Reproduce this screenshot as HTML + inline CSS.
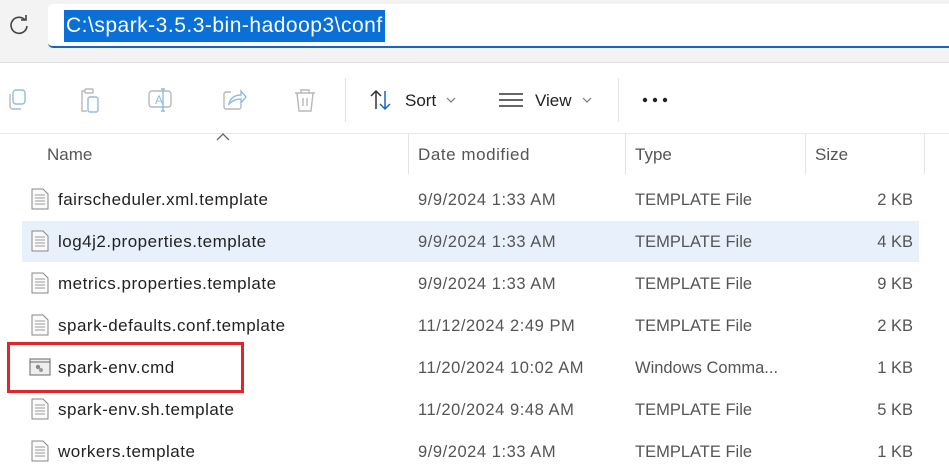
<!DOCTYPE html>
<html><head><meta charset="utf-8"><style>
*{margin:0;padding:0;box-sizing:border-box}
body{width:949px;height:472px;overflow:hidden;background:#fff;font-family:"Liberation Sans",sans-serif;color:#1a1a1a;position:relative}
.top{position:absolute;left:0;top:0;width:949px;height:63px;background:#f3f3f3;border-bottom:1px solid #e0e0e0}
.addr{position:absolute;left:48px;top:4px;width:901px;height:44px;background:#fff;border-radius:5px 0 0 5px;border-bottom:2px solid #1a64c2}
.sel{position:absolute;left:64px;top:10px;height:32px;background:#0a6fd6;color:#fff;font-size:21px;line-height:32px;padding:0 2px;letter-spacing:0.5px}
.tb{position:absolute}
.lbl{position:absolute;font-size:17px;color:#222}
.sep{position:absolute;width:1px;background:#e3e3e3}
.row{position:absolute;left:22px;width:897px;height:41px}
.t{position:absolute;font-size:16.5px;color:#222;white-space:nowrap}
.n{font-size:17px;letter-spacing:0.5px}
.d{letter-spacing:0.55px}
.g{color:#555}
.ic{position:absolute;left:31px}
</style></head><body>
<div class="top"></div>
<svg class="tb" style="left:8px;top:14px" width="22" height="22" viewBox="0 0 22 22"><path d="M17 6A8 8 0 1 0 19 12" fill="none" stroke="#444" stroke-width="1.6"/><path d="M13 5h5V0" fill="none" stroke="#444" stroke-width="1.6" transform="translate(0,1)"/></svg>
<div class="addr"></div>
<div class="sel">C:\spark-3.5.3-bin-hadoop3\conf</div>

<svg class="tb" style="left:5px;top:88px" width="24" height="24" viewBox="0 0 24 24" fill="none" stroke-width="1.4"><rect x="8" y="2" width="12" height="14" rx="3" stroke="#8fbbe6"/><path d="M5 6v12a3 3 0 0 0 3 3h8" stroke="#b8b8b8"/></svg>
<svg class="tb" style="left:77px;top:86px" width="24" height="28" viewBox="0 0 24 28" fill="none" stroke-width="1.4"><path d="M8 5H5v20h5" stroke="#b8b8b8"/><rect x="8" y="3" width="8" height="4" rx="1" stroke="#b8b8b8"/><rect x="11" y="11" width="10" height="15" rx="2" stroke="#8fbbe6"/></svg>
<svg class="tb" style="left:147px;top:87px" width="28" height="26" viewBox="0 0 28 26" fill="none" stroke-width="1.4"><rect x="2" y="4" width="22" height="16" rx="3" stroke="#b8b8b8"/><text x="8" y="17" font-size="12" fill="#8fbbe6" stroke="none" font-family="Liberation Sans">A</text><path d="M16 2v22M14 2h4M14 24h4" stroke="#8fbbe6"/></svg>
<svg class="tb" style="left:221px;top:87px" width="26" height="26" viewBox="0 0 26 26" fill="none" stroke-width="1.4"><path d="M10 5H5a2 2 0 0 0-2 2v13a2 2 0 0 0 2 2h13a2 2 0 0 0 2-2v-3" stroke="#b8b8b8"/><path d="M8 17c1-6 6-9 12-9V4l5 6-5 6v-4c-5 0-9 2-12 5z" stroke="#8fbbe6"/></svg>
<svg class="tb" style="left:292px;top:87px" width="26" height="26" viewBox="0 0 26 26" fill="none" stroke="#b8b8b8" stroke-width="1.4"><path d="M3 6h20M9 6V3h8v3M5 6l2 18h12l2-18M11 11v8M15 11v8"/></svg>
<div class="sep" style="left:345px;top:78px;height:44px"></div>
<svg class="tb" style="left:368px;top:88px" width="26" height="24" viewBox="0 0 26 24" fill="none" stroke="#333" stroke-width="1.5"><path d="M8 21V3M3 8l5-5 5 5"/><path d="M17 3v18M12 16l5 5 5-5" stroke="#1a64c2"/></svg>
<div class="lbl" style="left:405px;top:91px">Sort</div>
<svg class="tb" style="left:446px;top:97px" width="10" height="6" viewBox="0 0 10 6"><path d="M1 1l4 4 4-4" fill="none" stroke="#777" stroke-width="1.2"/></svg>
<svg class="tb" style="left:498px;top:91px" width="26" height="18" viewBox="0 0 26 18" stroke="#333" stroke-width="1.4"><path d="M1 3h24M1 9h24M1 15h24"/></svg>
<div class="lbl" style="left:535px;top:91px">View</div>
<svg class="tb" style="left:582px;top:97px" width="10" height="6" viewBox="0 0 10 6"><path d="M1 1l4 4 4-4" fill="none" stroke="#777" stroke-width="1.2"/></svg>
<div class="sep" style="left:618px;top:78px;height:44px"></div>
<svg class="tb" style="left:642px;top:97px" width="28" height="6" viewBox="0 0 28 6"><circle cx="3" cy="3" r="2.2" fill="#222"/><circle cx="13" cy="3" r="2.2" fill="#222"/><circle cx="23" cy="3" r="2.2" fill="#222"/></svg>

<div style="position:absolute;left:0;top:133px;width:949px;height:1px;background:#e8e8e8"></div>
<svg class="tb" style="left:216px;top:133px" width="14" height="8" viewBox="0 0 14 8"><path d="M1 7l6-6 6 6" fill="none" stroke="#666" stroke-width="1.3"/></svg>
<div class="t g" style="left:47px;top:145px;font-size:17px">Name</div>
<div class="sep" style="left:408px;top:134px;height:40px"></div>
<div class="t g d" style="left:418px;top:145px;font-size:17px">Date modified</div>
<div class="sep" style="left:625px;top:134px;height:40px"></div>
<div class="t g" style="left:635px;top:145px;font-size:17px">Type</div>
<div class="sep" style="left:805px;top:134px;height:40px"></div>
<div class="t g" style="left:815px;top:145px;font-size:17px">Size</div>
<div class="sep" style="left:924px;top:134px;height:40px"></div>

<div class="row" style="top:221px;background:#e8f1fb"></div>
<div style="position:absolute;left:7px;top:342px;width:237px;height:51px;border:3px solid #e0262b"></div>

<svg class="ic" style="top:188px" width="18" height="22" viewBox="0 0 18 22"><path d="M1 1h11l5 5v15H1z" fill="#fafafa" stroke="#888"/><path d="M4 7h10M4 10h10M4 13h10M4 16h10" stroke="#999"/></svg>
<div class="t n" style="left:58px;top:190px">fairscheduler.xml.template</div><div class="t g d" style="left:418px;top:191px">9/9/2024 1:33 AM</div><div class="t g" style="left:635px;top:191px">TEMPLATE File</div><div class="t g" style="right:36px;top:191px">2 KB</div>

<svg class="ic" style="top:230px" width="18" height="22" viewBox="0 0 18 22"><path d="M1 1h11l5 5v15H1z" fill="#fafafa" stroke="#888"/><path d="M4 7h10M4 10h10M4 13h10M4 16h10" stroke="#999"/></svg>
<div class="t n" style="left:58px;top:232px">log4j2.properties.template</div><div class="t g d" style="left:418px;top:233px">9/9/2024 1:33 AM</div><div class="t g" style="left:635px;top:233px">TEMPLATE File</div><div class="t g" style="right:36px;top:233px">4 KB</div>

<svg class="ic" style="top:272px" width="18" height="22" viewBox="0 0 18 22"><path d="M1 1h11l5 5v15H1z" fill="#fafafa" stroke="#888"/><path d="M4 7h10M4 10h10M4 13h10M4 16h10" stroke="#999"/></svg>
<div class="t n" style="left:58px;top:274px">metrics.properties.template</div><div class="t g d" style="left:418px;top:275px">9/9/2024 1:33 AM</div><div class="t g" style="left:635px;top:275px">TEMPLATE File</div><div class="t g" style="right:36px;top:275px">9 KB</div>

<svg class="ic" style="top:314px" width="18" height="22" viewBox="0 0 18 22"><path d="M1 1h11l5 5v15H1z" fill="#fafafa" stroke="#888"/><path d="M4 7h10M4 10h10M4 13h10M4 16h10" stroke="#999"/></svg>
<div class="t n" style="left:58px;top:316px">spark-defaults.conf.template</div><div class="t g d" style="left:418px;top:317px">11/12/2024 2:49 PM</div><div class="t g" style="left:635px;top:317px">TEMPLATE File</div><div class="t g" style="right:36px;top:317px">2 KB</div>

<svg class="ic" style="left:29px;top:358px" width="22" height="18" viewBox="0 0 22 18"><rect x="1" y="1" width="20" height="16" fill="#eee" stroke="#666"/><path d="M1 4h20" stroke="#666"/><circle cx="9" cy="9" r="2.2" fill="#888"/><circle cx="12" cy="12" r="2" fill="#999"/></svg>
<div class="t n" style="left:58px;top:358px">spark-env.cmd</div><div class="t g d" style="left:418px;top:359px">11/20/2024 10:02 AM</div><div class="t g" style="left:635px;top:359px">Windows Comma...</div><div class="t g" style="right:36px;top:359px">1 KB</div>

<svg class="ic" style="top:398px" width="18" height="22" viewBox="0 0 18 22"><path d="M1 1h11l5 5v15H1z" fill="#fafafa" stroke="#888"/><path d="M4 7h10M4 10h10M4 13h10M4 16h10" stroke="#999"/></svg>
<div class="t n" style="left:58px;top:400px">spark-env.sh.template</div><div class="t g d" style="left:418px;top:401px">11/20/2024 9:48 AM</div><div class="t g" style="left:635px;top:401px">TEMPLATE File</div><div class="t g" style="right:36px;top:401px">5 KB</div>

<svg class="ic" style="top:440px" width="18" height="22" viewBox="0 0 18 22"><path d="M1 1h11l5 5v15H1z" fill="#fafafa" stroke="#888"/><path d="M4 7h10M4 10h10M4 13h10M4 16h10" stroke="#999"/></svg>
<div class="t n" style="left:58px;top:442px">workers.template</div><div class="t g d" style="left:418px;top:443px">9/9/2024 1:33 AM</div><div class="t g" style="left:635px;top:443px">TEMPLATE File</div><div class="t g" style="right:36px;top:443px">1 KB</div>
</body></html>
